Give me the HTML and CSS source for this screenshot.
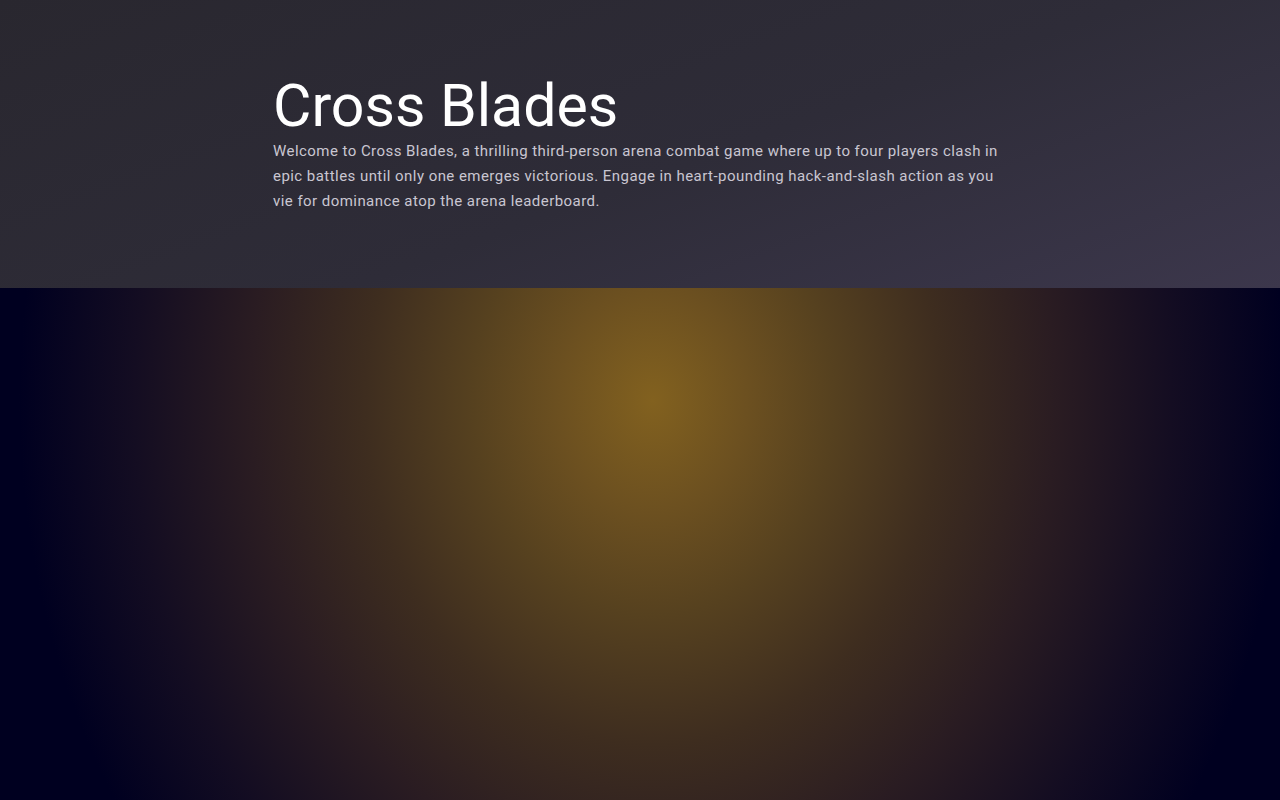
FILE: index.html
```html
<!DOCTYPE html>
<html lang="en">
<head>
    <meta charset="UTF-8">
    <meta name="viewport" content="width=device-width, initial-scale=1.0">
    <title>Cross Blades</title>
    <link rel="stylesheet" href="styles.css">
</head>
<body>
    <header class="hero">
        <div class="hero-inner">
            <h1>Cross Blades</h1>
            <p>Welcome to Cross Blades, a thrilling third-person arena combat game where up to four players clash in epic battles until only one emerges victorious. Engage in heart-pounding hack-and-slash action as you vie for dominance atop the arena leaderboard.</p>
        </div>
    </header>
    <main class="arena"></main>
</body>
</html>
```

FILE: styles.css
```css
* {
    box-sizing: border-box;
}
body {
    margin: 0;
    font-family: Roboto, "Liberation Sans", sans-serif;
    background-color: #000020;
}
.hero {
    height: 288px;
    background: linear-gradient(160deg, #29272f 0%, #2e2c38 55%, #3c374c 100%);
    padding-top: 73px;
}
.hero-inner {
    max-width: 768px;
    margin: 0 auto;
    padding: 0 16px 0 17px;
}
.hero h1 {
    margin: 0;
    font-size: 59px;
    font-weight: 400;
    line-height: 66px;
    color: #fff;
}
.hero p {
    margin: 0;
    font-size: 15px;
    line-height: 25px;
    letter-spacing: 0.45px;
    color: #c9c6d1;
}
/* arena floor lit from above */
.arena {
    height: 512px;
    background: radial-gradient(ellipse 720px 860px at 51% 22%,
        #82611f 0%,
        #6c5020 13%,
        #56411f 25%,
        #3e2d1f 40%,
        #2a1c22 56%,
        #140d22 72%,
        #000020 88%);
}
```
